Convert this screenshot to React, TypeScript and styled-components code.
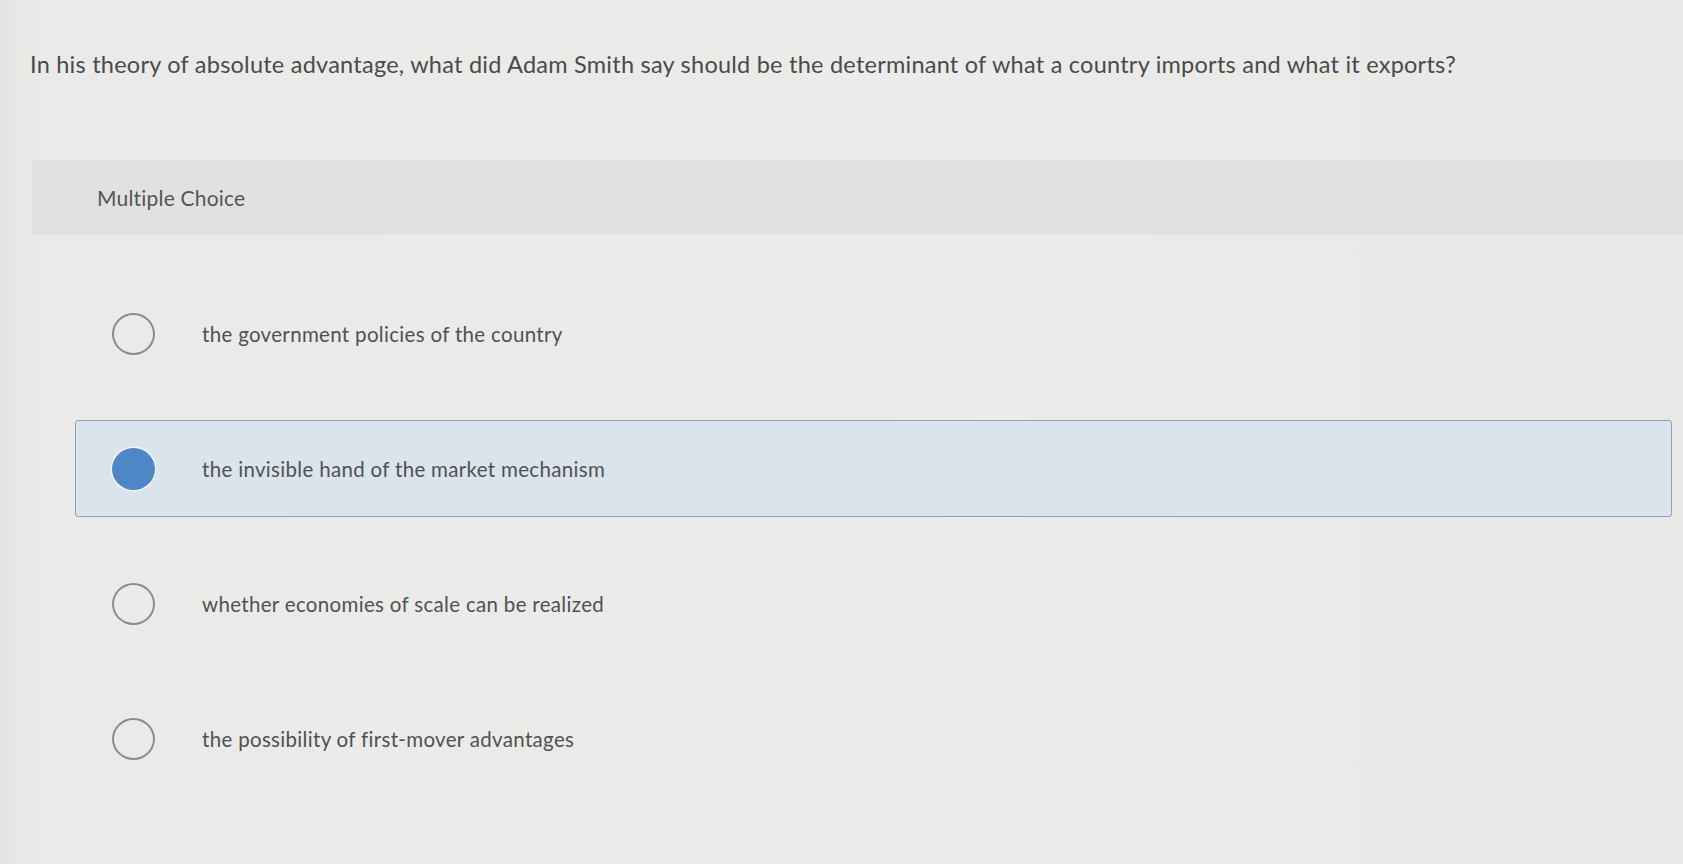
import styled, { createGlobalStyle } from "styled-components";

const GlobalStyle = createGlobalStyle`
  html, body {
    margin: 0;
    padding: 0;
    background: #e9e9e7;
  }
  body {
    font-family: Lato, "Open Sans", "Liberation Sans", sans-serif;
  }
`;

const Page = styled.div`
  width: 1683px;
  height: 864px;
  overflow: hidden;
  padding-top: 44px;
  box-sizing: border-box;
  background: linear-gradient(90deg, #e4e4e2 0px, #eaeae8 40px, #ebebe9 60%, #e8e8e6 100%);
`;

const Question = styled.p`
  margin: 0 0 0 30px;
  font-size: 23.5px;
  line-height: 40px;
  color: #4a4a4c;
  letter-spacing: 0.24px;
`;

const Card = styled.section`
  margin: 76px 0 0 32px;
`;

const CardHeader = styled.div`
  height: 75px;
  display: flex;
  align-items: center;
  padding-left: 65px;
  background: #e1e1df;
  font-size: 21px;
  letter-spacing: 0.2px;
  color: #555557;
`;

const OptionList = styled.div`
  display: flex;
  flex-direction: column;
  gap: 38px;
  padding: 50px 11px 0 43px;
`;

const Option = styled.label<{ $selected?: boolean }>`
  height: 97px;
  box-sizing: border-box;
  display: flex;
  align-items: center;
  gap: 47px;
  padding-left: 36px;
  border-radius: 3px;
  border: 1px solid ${({ $selected }) => ($selected ? "#8ea2bb" : "transparent")};
  background: ${({ $selected }) => ($selected ? "#dae4ec" : "transparent")};
  font-size: 20.5px;
  letter-spacing: 0.32px;
  color: #515153;
  cursor: pointer;
`;

const Radio = styled.span<{ $checked?: boolean }>`
  flex: none;
  width: 43px;
  height: 42px;
  box-sizing: border-box;
  border-radius: 50%;
  border: ${({ $checked }) => ($checked ? "none" : "2px solid #8b8b8d")};
  background: ${({ $checked }) => ($checked ? "#4d87c6" : "transparent")};
  box-shadow: ${({ $checked }) => ($checked ? "0 0 0 1.5px #f1f4f7" : "none")};
`;

const options = [
  "the government policies of the country",
  "the invisible hand of the market mechanism",
  "whether economies of scale can be realized",
  "the possibility of first-mover advantages",
];

export default function App() {
  const selected = 1;
  return (
    <>
      <GlobalStyle />
      <Page>
        <Question>
          In his theory of absolute advantage, what did Adam Smith say should be the determinant
          of what a country imports and what it exports?
        </Question>
        <Card>
          <CardHeader>Multiple Choice</CardHeader>
          <OptionList>
            {options.map((text, i) => (
              <Option key={text} $selected={i === selected}>
                <Radio $checked={i === selected} />
                <span>{text}</span>
              </Option>
            ))}
          </OptionList>
        </Card>
      </Page>
    </>
  );
}
